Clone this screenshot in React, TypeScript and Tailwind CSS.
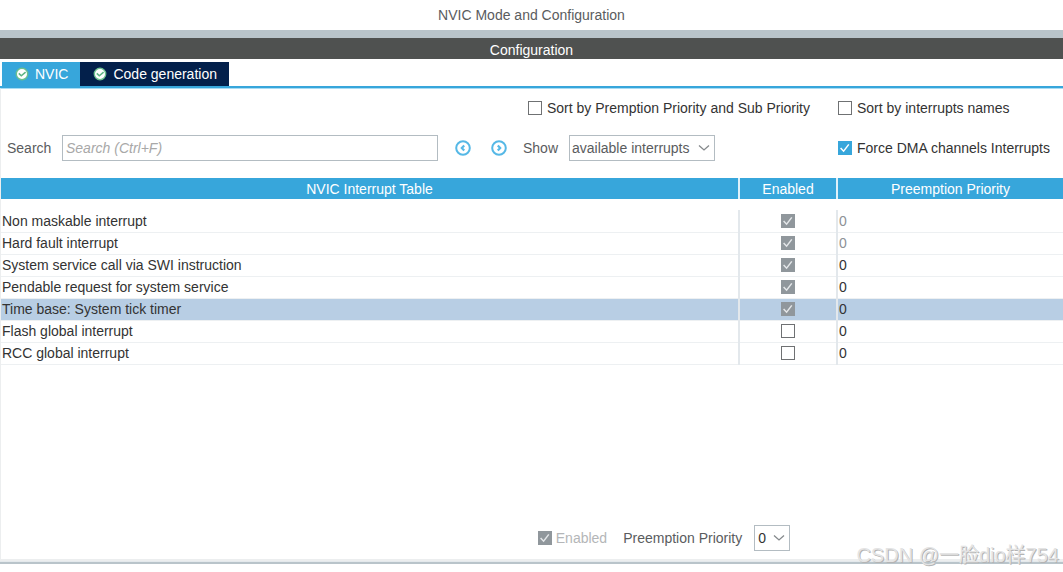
import { useState } from "react";
import clsx from "clsx";

type Interrupt = {
  id: number;
  name: string;
  enabled: boolean;
  locked: boolean;
  fixedPriority: boolean;
};

const initialInterrupts: Interrupt[] = [
  { id: 1, name: "Non maskable interrupt", enabled: true, locked: true, fixedPriority: true },
  { id: 2, name: "Hard fault interrupt", enabled: true, locked: true, fixedPriority: true },
  { id: 3, name: "System service call via SWI instruction", enabled: true, locked: true, fixedPriority: false },
  { id: 4, name: "Pendable request for system service", enabled: true, locked: true, fixedPriority: false },
  { id: 5, name: "Time base: System tick timer", enabled: true, locked: true, fixedPriority: false },
  { id: 6, name: "Flash global interrupt", enabled: false, locked: false, fixedPriority: false },
  { id: 7, name: "RCC global interrupt", enabled: false, locked: false, fixedPriority: false },
];

function CheckBox({
  id,
  checked,
  disabled,
  onChange,
  label,
}: {
  id: string;
  checked: boolean;
  disabled?: boolean;
  onChange?: (value: boolean) => void;
  label?: string;
}) {
  return (
    <span className="relative inline-flex size-[14px] shrink-0">
      <input
        id={id}
        type="checkbox"
        aria-label={label}
        checked={checked}
        disabled={disabled}
        onChange={(e) => onChange?.(e.target.checked)}
        className="size-[14px] appearance-none border border-[#6f7173] bg-white checked:border-[#37a6db] checked:bg-[#37a6db] disabled:checked:border-[#90979c] disabled:checked:bg-[#90979c]"
      />
      {checked ? (
        <svg
          viewBox="0 0 14 14"
          className={clsx("pointer-events-none absolute inset-0 size-[14px]", disabled ? "text-[#e4e7e9]" : "text-white")}
          fill="none"
          stroke="currentColor"
          strokeWidth="1.5"
        >
          <path d="M2.6 7 5.6 10.2 10.8 3.4" />
        </svg>
      ) : null}
    </span>
  );
}

function TabIcon() {
  return (
    <svg viewBox="0 0 14 14" className="size-[14px]" fill="none">
      <circle cx="7" cy="7" r="5.7" fill="#fff" stroke="#6cc08f" strokeWidth="1.4" />
      <path d="M3.8 6.4 6.3 8.8 10.6 5.2" stroke="#5fb585" strokeWidth="1.6" />
    </svg>
  );
}

function ArrowIcon({ d }: { d: string }) {
  return (
    <svg viewBox="0 0 16 16" className="size-4" fill="none" stroke="#55b8e6">
      <circle cx="8" cy="8" r="6.8" strokeWidth="2" />
      <path d={d} strokeWidth="2.2" />
    </svg>
  );
}

function Chevron() {
  return (
    <svg
      viewBox="0 0 12 8"
      className="pointer-events-none absolute top-1/2 right-[5px] h-2 w-3 -translate-y-1/2"
      fill="none"
      stroke="#85898c"
      strokeWidth="1.3"
    >
      <path d="M1 1.5 6 6 11 1.5" />
    </svg>
  );
}

const tabs = ["NVIC", "Code generation"];

export default function App() {
  const [tab, setTab] = useState("NVIC");
  const [interrupts, setInterrupts] = useState(initialInterrupts);
  const [selectedId, setSelectedId] = useState(5);
  const [search, setSearch] = useState("");
  const [sortPriority, setSortPriority] = useState(false);
  const [sortNames, setSortNames] = useState(false);
  const [forceDma, setForceDma] = useState(true);

  const selected = interrupts.find((i) => i.id === selectedId);

  function setEnabled(id: number, enabled: boolean) {
    setInterrupts((list) => list.map((i) => (i.id === id ? { ...i, enabled } : i)));
  }

  return (
    <div className="relative flex min-h-screen flex-col bg-white pb-2 font-['Liberation_Sans','Noto_Sans_CJK_SC',sans-serif] text-sm leading-5 text-[#333]">
      <header>
        <h1 className="h-[30px] pt-[5px] text-center text-[#5a5c5e]">NVIC Mode and Configuration</h1>
        <div className="h-2 bg-[#b9c4ca]" />
        <h2 className="h-[21px] bg-[#4f5150] text-center leading-6 text-white">Configuration</h2>
      </header>

      <div role="tablist" className="flex border-b-2 border-[#37a6db] pt-[3px] pl-[2px]">
        {tabs.map((t) => (
          <button
            key={t}
            type="button"
            role="tab"
            aria-selected={tab === t}
            onClick={() => setTab(t)}
            className={clsx(
              "flex h-6 items-center gap-[6px] pr-3 pl-[13px] text-white",
              tab === t ? "bg-[#37a6db]" : "bg-[#03204b]",
            )}
          >
            <TabIcon />
            {t}
          </button>
        ))}
      </div>

      <main className="flex flex-1 flex-col border-t border-l border-t-[#a8dcf4] border-l-[#eceeef]">
        <div className="flex justify-end pt-[9px]">
          <div className="flex w-[310px] items-center gap-[5px]">
            <CheckBox id="sort-priority" checked={sortPriority} onChange={setSortPriority} />
            <label htmlFor="sort-priority">Sort by Premption Priority and Sub Priority</label>
          </div>
          <div className="flex w-[225px] items-center gap-[5px]">
            <CheckBox id="sort-names" checked={sortNames} onChange={setSortNames} />
            <label htmlFor="sort-names">Sort by interrupts names</label>
          </div>
        </div>

        <div className="flex items-center pt-[17px] pl-[6px]">
          <label htmlFor="search" className="w-[55px] text-[#5a5c5e]">
            Search
          </label>
          <input
            id="search"
            type="text"
            value={search}
            onChange={(e) => setSearch(e.target.value)}
            placeholder="Search (Ctrl+F)"
            className="h-[26px] min-w-0 flex-1 border border-[#b3bcc2] px-[3px] placeholder:text-[#a8a8a8] placeholder:italic"
          />
          <button type="button" aria-label="Previous" className="ml-[17px]">
            <ArrowIcon d="M9.2 5.4 6.8 8 9.2 10.6" />
          </button>
          <button type="button" aria-label="Next" className="ml-5">
            <ArrowIcon d="M6.8 5.4 9.2 8 6.8 10.6" />
          </button>
          <label htmlFor="show" className="ml-4 w-[46px] text-[#5a5c5e]">
            Show
          </label>
          <div className="relative mr-[123px]">
            <select
              id="show"
              className="block h-[26px] w-[146px] appearance-none border border-[#b3bcc2] bg-white pl-[2px] text-[#5a5c5e]"
            >
              <option>available interrupts</option>
              <option>enabled interrupts</option>
            </select>
            <Chevron />
          </div>
          <div className="flex w-[225px] items-center gap-[5px]">
            <CheckBox id="force-dma" checked={forceDma} onChange={setForceDma} />
            <label htmlFor="force-dma">Force DMA channels Interrupts</label>
          </div>
        </div>

        <table className="mt-[17px] w-full table-fixed border-collapse">
          <colgroup>
            <col />
            <col className="w-[98px]" />
            <col className="w-[226px]" />
          </colgroup>
          <thead>
            <tr className="h-[21px] bg-[#37a6db] text-white">
              <th className="p-0 font-normal">NVIC Interrupt Table</th>
              <th className="border-x-2 border-[#dff1fa] p-0 font-normal">Enabled</th>
              <th className="p-0 font-normal">Preemption Priority</th>
            </tr>
          </thead>
          <tbody>
            <tr className="h-[11px]" aria-hidden="true">
              <td colSpan={3} className="p-0" />
            </tr>
            {interrupts.map((i) => (
              <tr
                key={i.id}
                onClick={() => setSelectedId(i.id)}
                className={clsx("h-[22px] border-b border-[#edf0f2]", i.id === selectedId && "bg-[#b8cee4]")}
              >
                <td className="p-0 pl-px">{i.name}</td>
                <td className="border-x-2 border-[#e3e8ec] p-0">
                  <div className="flex justify-center">
                    <CheckBox
                      id={`enabled-${i.id}`}
                      label={`${i.name} enabled`}
                      checked={i.enabled}
                      disabled={i.locked}
                      onChange={(v) => setEnabled(i.id, v)}
                    />
                  </div>
                </td>
                <td className={clsx("p-0 pl-px", i.fixedPriority && "text-[#8d9296]")}>0</td>
              </tr>
            ))}
          </tbody>
        </table>

        <div className="mt-auto flex items-center justify-center pb-2 pl-[264px]">
          <CheckBox
            id="selected-enabled"
            checked={selected?.enabled ?? false}
            disabled={selected?.locked}
            onChange={(v) => setEnabled(selectedId, v)}
          />
          <label
            htmlFor="selected-enabled"
            className={clsx("ml-1", selected?.locked ? "text-[#b4b6b8]" : "text-[#5a5c5e]")}
          >
            Enabled
          </label>
          <label htmlFor="selected-priority" className="ml-4 text-[#5a5c5e]">
            Preemption Priority
          </label>
          <div className="relative ml-3">
            <select
              id="selected-priority"
              className="block h-[26px] w-9 appearance-none border border-[#b3bcc2] bg-white pl-[3px]"
            >
              <option>0</option>
              <option>1</option>
            </select>
            <Chevron />
          </div>
        </div>
      </main>
      <footer className="h-[5px] border-t-2 border-b-2 border-t-[#eceeef] border-b-[#b9c4ca] bg-[#e4e9ec]" />
      <div className="pointer-events-none absolute right-1 bottom-[3px] text-xl leading-7 text-[#e4e4e4] [text-shadow:1px_1px_0_#b4b4b4]">
        CSDN @一脸dio样754
      </div>
    </div>
  );
}
